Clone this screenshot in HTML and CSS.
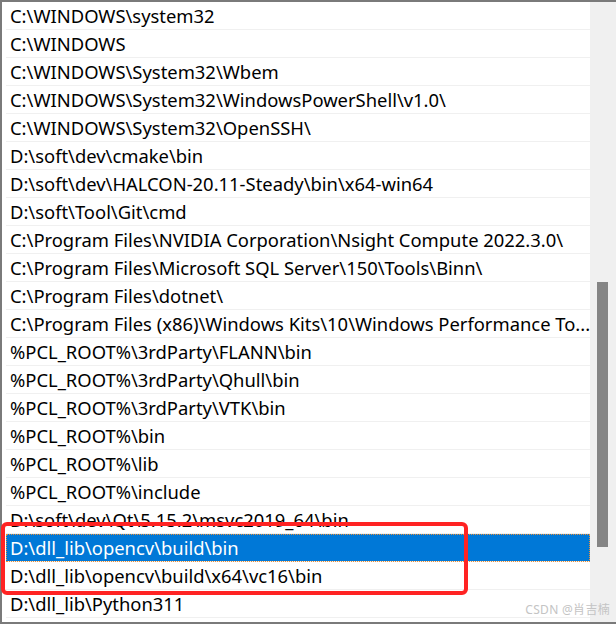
FILE: index.html
```html
<!DOCTYPE html>
<html lang="en">
<head>
  <meta charset="UTF-8">
  <title>Edit environment variable</title>
  <link rel="stylesheet" href="styles.css">
</head>
<body>
  <div class="listbox">
    <div class="items">
      <div class="row">C:\WINDOWS\system32</div>
      <div class="row">C:\WINDOWS</div>
      <div class="row">C:\WINDOWS\System32\Wbem</div>
      <div class="row">C:\WINDOWS\System32\WindowsPowerShell\v1.0\</div>
      <div class="row">C:\WINDOWS\System32\OpenSSH\</div>
      <div class="row">D:\soft\dev\cmake\bin</div>
      <div class="row">D:\soft\dev\HALCON-20.11-Steady\bin\x64-win64</div>
      <div class="row">D:\soft\Tool\Git\cmd</div>
      <div class="row">C:\Program Files\NVIDIA Corporation\Nsight Compute 2022.3.0\</div>
      <div class="row">C:\Program Files\Microsoft SQL Server\150\Tools\Binn\</div>
      <div class="row">C:\Program Files\dotnet\</div>
      <div class="row">C:\Program Files (x86)\Windows Kits\10\Windows Performance To...</div>
      <div class="row">%PCL_ROOT%\3rdParty\FLANN\bin</div>
      <div class="row">%PCL_ROOT%\3rdParty\Qhull\bin</div>
      <div class="row">%PCL_ROOT%\3rdParty\VTK\bin</div>
      <div class="row">%PCL_ROOT%\bin</div>
      <div class="row">%PCL_ROOT%\lib</div>
      <div class="row">%PCL_ROOT%\include</div>
      <div class="row">D:\soft\dev\Qt\5.15.2\msvc2019_64\bin</div>
      <div class="row selected">D:\dll_lib\opencv\build\bin</div>
      <div class="row">D:\dll_lib\opencv\build\x64\vc16\bin</div>
      <div class="row">D:\dll_lib\Python311</div>
      <div class="row"></div>
    </div>
    <div class="scrollbar">
      <div class="thumb"></div>
    </div>
  </div>

  <!-- annotation drawn over the list -->
  <div class="mark"></div>
  <div class="watermark">CSDN @肖吉楠</div>
</body>
</html>
```

FILE: styles.css
```css
* { margin: 0; padding: 0; box-sizing: border-box; }
html, body { width: 616px; height: 624px; overflow: hidden; background: #ffffff; }
body { position: relative; font-family: 'Noto Sans', 'Noto Sans CJK SC', sans-serif; color: #000000; }

.listbox {
  display: flex;
  width: 616px;
  height: 624px;
  border-top: 2px solid #7a7a7a;
  border-left: 2px solid #7a7a7a;
  border-bottom: 2px solid #7a7a7a;
  overflow: hidden;
}
.items { flex: 1; padding-left: 4px; overflow: hidden; }
.row {
  height: 28px;
  line-height: 28px;
  padding-left: 4px;
  border-bottom: 1px solid #f0f0f0;
  font-size: 18.4px;
  white-space: nowrap;
  overflow: hidden;
}
.row.selected {
  background-color: #0078d7;
  color: #ffffff;
  outline: 1px dotted #e8903a;
  outline-offset: -1px;
}

.scrollbar { width: 26px; background-color: #f0f0f0; padding: 280px 0 0 7px; }
.thumb { width: 11px; height: 265px; background-color: #858585; }

.mark {
  position: absolute;
  left: 1px;
  top: 522px;
  width: 467px;
  height: 73px;
  border: 4px solid #ff2323;
  border-radius: 6px;
}
.watermark {
  position: absolute;
  right: 6px;
  bottom: 6px;
  font-size: 12px;
  color: #c4c4c4;
  letter-spacing: 0.3px;
}
```
